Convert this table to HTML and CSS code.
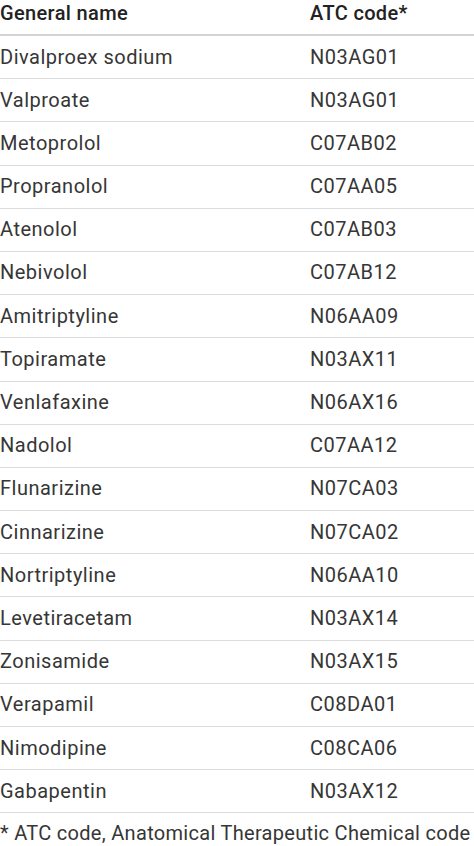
FILE: index.html
```html
<!DOCTYPE html>
<html lang="en">
<head>
<meta charset="utf-8">
<link rel="stylesheet" href="styles.css">
</head>
<body>
<div class="page">
<table class="atc-table">
<thead>
<tr><th class="col-name">General name</th><th class="col-code">ATC code*</th></tr>
</thead>
<tbody>
<tr><td>Divalproex sodium</td><td>N03AG01</td></tr>
<tr><td>Valproate</td><td>N03AG01</td></tr>
<tr><td>Metoprolol</td><td>C07AB02</td></tr>
<tr><td>Propranolol</td><td>C07AA05</td></tr>
<tr><td>Atenolol</td><td>C07AB03</td></tr>
<tr><td>Nebivolol</td><td>C07AB12</td></tr>
<tr><td>Amitriptyline</td><td>N06AA09</td></tr>
<tr><td>Topiramate</td><td>N03AX11</td></tr>
<tr><td>Venlafaxine</td><td>N06AX16</td></tr>
<tr><td>Nadolol</td><td>C07AA12</td></tr>
<tr><td>Flunarizine</td><td>N07CA03</td></tr>
<tr><td>Cinnarizine</td><td>N07CA02</td></tr>
<tr><td>Nortriptyline</td><td>N06AA10</td></tr>
<tr><td>Levetiracetam</td><td>N03AX14</td></tr>
<tr><td>Zonisamide</td><td>N03AX15</td></tr>
<tr><td>Verapamil</td><td>C08DA01</td></tr>
<tr><td>Nimodipine</td><td>C08CA06</td></tr>
<tr><td>Gabapentin</td><td>N03AX12</td></tr>
</tbody>
</table>
<p class="footnote">* ATC code, Anatomical Therapeutic Chemical code</p>
</div>
</body>
</html>
```
FILE: styles.css
```css
html, body {
  margin: 0;
  padding: 0;
  background: #ffffff;
}
.page {
  width: 474px;
  overflow: hidden;
  font-family: Roboto, "Liberation Sans", sans-serif;
  color: #363636;
}
.atc-table {
  width: 100%;
  border-collapse: collapse;
  table-layout: fixed;
}
.atc-table th {
  font-weight: 500;
  color: #222222;
  text-align: left;
  font-size: 20px;
  line-height: 24px;
  letter-spacing: 0.35px;
  padding: 0.5px 0 9.5px 0;
  border-bottom: 2px solid #d4d4d4;
}
.col-name {
  width: 310px;
}
.atc-table td {
  font-size: 20px;
  line-height: 24px;
  letter-spacing: 0.5px;
  padding: 8.5px 0 9.7px 0;
  border-bottom: 1px solid #dcdcdc;
  white-space: nowrap;
}
.footnote {
  margin: 0;
  padding-top: 7.5px;
  font-size: 20px;
  line-height: 24px;
  letter-spacing: 0.3px;
  white-space: nowrap;
}
```
